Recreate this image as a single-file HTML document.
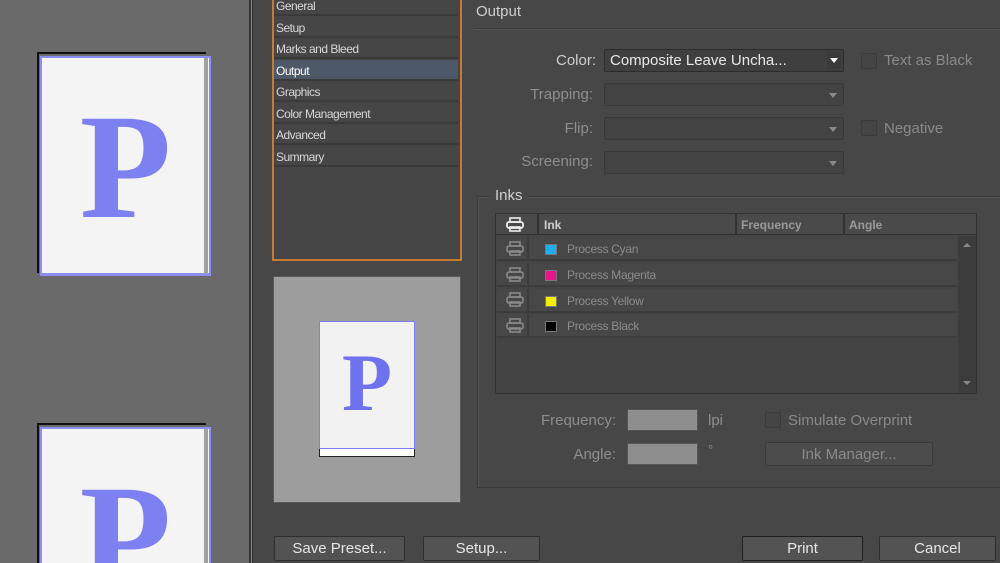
<!DOCTYPE html>
<html style="width:1000px;height:563px;overflow:hidden"><head><meta charset="utf-8"><style>
*{margin:0;padding:0;box-sizing:border-box}
body{width:1000px;height:563px;overflow:hidden;background:#474747;font-family:"Liberation Sans",sans-serif;position:relative}
.a{position:absolute}
.nav div{position:absolute;left:0;width:184px;height:21px;border-bottom:2px solid #3a3a3a;color:#d8d8d8;font-size:12px;line-height:22px;padding-left:2px;letter-spacing:-0.5px}
.lbl{position:absolute;font-size:15px;color:#8e8e8e;text-align:right;width:140px}
.dd{position:absolute;left:604px;width:240px;height:23px;background:#434343;border:1px solid #383838;border-radius:2px}
.dd:after{content:"";position:absolute;right:6px;top:9px;border-left:4px solid transparent;border-right:4px solid transparent;border-top:5px solid #8a8a8a}
.cb{position:absolute;width:16px;height:16px;border:1px solid #3a3a3a;background:#454545;border-radius:2px}
.btn{position:absolute;height:25px;background:#535353;border:1px solid #2e2e2e;border-radius:2px;color:#e6e6e6;font-size:15px;text-align:center;line-height:24px}
.row{position:absolute;left:497px;width:460px;height:24px;border-bottom:2px solid #3c3c3c;font-size:12px;color:#8c8c8c;line-height:25px}
.row .ic{position:absolute;left:0;width:32px;height:24px;border-right:2px solid #3c3c3c}
.sw{position:absolute;left:48px;top:7px;width:12px;height:11px;border:1px solid #777}
.row span{position:absolute;left:70px;letter-spacing:-0.3px}
.P{position:absolute;text-align:center;font-family:'Liberation Serif',serif;font-weight:bold;color:#7c80f0;overflow:hidden}
</style></head><body>
<div class="a" style="left:0;top:0;width:249px;height:563px;background:#6a6a6a;overflow:hidden">
<div class="a" style="left:37px;top:52px;width:169px;height:221px;border:2px solid #111;border-right:none;border-bottom:none"></div>
<div class="a" style="left:40px;top:56px;width:171px;height:220px;background:#f4f4f4;border:2px solid #8a8ef0;border-bottom:3px solid #8a8ef0"></div>
<div class="a" style="left:204px;top:58px;width:4px;height:216px;background:#a0a0a0"></div>
<div class="P" style="left:40px;top:67px;width:171px;height:200px;font-size:150px;line-height:200px">P</div>
<div class="a" style="left:37px;top:423px;width:169px;height:140px;border:2px solid #111;border-right:none;border-bottom:none"></div>
<div class="a" style="left:40px;top:427px;width:171px;height:136px;background:#f4f4f4;border:2px solid #8a8ef0;border-bottom:none"></div>
<div class="a" style="left:204px;top:429px;width:4px;height:134px;background:#a0a0a0"></div>
<div class="P" style="left:40px;top:438px;width:171px;height:125px;font-size:150px;line-height:200px">P</div>
</div>
<div class="a" style="left:249px;top:0;width:2px;height:563px;background:#333"></div>
<div class="a" style="left:251px;top:0;width:1px;height:563px;background:#8a8a8a"></div>
<div class="a" style="left:252px;top:0;width:1px;height:563px;background:#2e2e2e"></div>

<div class="a" style="left:272px;top:-3px;width:190px;height:264px;border:2px solid #c77a32;background:#464646"></div>
<div class="a nav" style="left:274px;top:-5px">
<div style="top:0">General</div>
<div style="top:22px">Setup</div>
<div style="top:43px">Marks and Bleed</div>
<div style="top:65px;background:#4d5868;color:#fff">Output</div>
<div style="top:86px">Graphics</div>
<div style="top:108px">Color Management</div>
<div style="top:129px">Advanced</div>
<div style="top:151px">Summary</div>
</div>

<div class="a" style="left:273px;top:276px;width:188px;height:227px;background:#9d9d9d;border:1px solid #5a5a5a"></div>
<div class="a" style="left:319px;top:448px;width:96px;height:9px;background:#fff;border:1px solid #222;border-top:none"></div>
<div class="a" style="left:319px;top:321px;width:96px;height:128px;background:#f2f2f2;border:1px solid #7a7ef0"></div>
<div class="P" style="left:319px;top:333px;width:96px;height:100px;font-size:82px;line-height:100px;color:#6e72ee">P</div>

<div class="a" style="left:476px;top:3px;font-size:15px;color:#d0d0d0">Output</div>
<div class="a" style="left:474px;top:28px;width:526px;height:1px;background:#3c3c3c"></div>
<div class="a" style="left:474px;top:29px;width:526px;height:1px;background:#525252"></div>

<div class="lbl" style="left:456px;top:52px;color:#cfcfcf">Color:</div>
<div class="dd" style="top:49px;background:#3f3f3f;border-color:#2c2c2c"><span style="position:absolute;left:5px;top:2px;font-size:15px;color:#e8e8e8">Composite Leave Uncha...</span></div>
<div class="a" style="left:827px;top:52px;width:14px;height:17px;background:#3a3a3a"></div>
<div class="a" style="left:830px;top:58px;border-left:4px solid transparent;border-right:4px solid transparent;border-top:5px solid #fff"></div>
<div class="cb" style="left:861px;top:53px"></div>
<div class="a" style="left:884px;top:52px;font-size:15px;color:#8a8a8a">Text as Black</div>

<div class="lbl" style="left:453px;top:86px">Trapping:</div>
<div class="dd" style="top:83px"></div>
<div class="lbl" style="left:453px;top:120px">Flip:</div>
<div class="dd" style="top:117px"></div>
<div class="cb" style="left:861px;top:120px"></div>
<div class="a" style="left:884px;top:120px;font-size:15px;color:#8a8a8a">Negative</div>
<div class="lbl" style="left:453px;top:153px">Screening:</div>
<div class="dd" style="top:151px"></div>

<div class="a" style="left:477px;top:196px;width:523px;height:292px;border:1px solid #3a3a3a;border-right:none;box-shadow:inset 1px 1px 0 #525252"></div>
<div class="a" style="left:490px;top:187px;padding:0 5px;background:#474747;font-size:15px;color:#d0d0d0">Inks</div>

<div class="a" style="left:495px;top:213px;width:482px;height:181px;background:#444;border:1px solid #333"></div>
<div class="a" style="left:496px;top:214px;width:480px;height:21px;background:#4a4a4a;border-bottom:1px solid #333"></div>
<div class="a" style="left:537px;top:214px;width:2px;height:21px;background:#333"></div>
<div class="a" style="left:735px;top:214px;width:2px;height:21px;background:#333"></div>
<div class="a" style="left:843px;top:214px;width:2px;height:21px;background:#333"></div>
<svg class="a" style="left:505px;top:217px" width="20" height="16" viewBox="0 0 20 16"><rect x="5" y="1" width="10" height="4" fill="none" stroke="#eee" stroke-width="1.6"/><rect x="2" y="5" width="16" height="6" rx="2" fill="none" stroke="#eee" stroke-width="1.8"/><rect x="5" y="10" width="10" height="4" fill="none" stroke="#eee" stroke-width="1.6"/></svg>
<div class="a" style="left:544px;top:218px;font-size:12px;font-weight:bold;color:#d0d0d0">Ink</div>
<div class="a" style="left:741px;top:218px;font-size:12px;font-weight:bold;color:#9a9a9a">Frequency</div>
<div class="a" style="left:849px;top:218px;font-size:12px;font-weight:bold;color:#9a9a9a">Angle</div>

<div class="a" style="left:958px;top:236px;width:18px;height:157px;background:#3c3c3c"></div>
<div class="a" style="left:963px;top:243px;border-left:4px solid transparent;border-right:4px solid transparent;border-bottom:4px solid #888"></div>
<div class="a" style="left:963px;top:381px;border-left:4px solid transparent;border-right:4px solid transparent;border-top:4px solid #888"></div>

<div class="row" style="top:237px;background:#474747"><div class="ic"></div><div class="sw" style="background:#1eaef0"></div><span>Process Cyan</span></div>
<div class="row" style="top:263px;background:#474747"><div class="ic"></div><div class="sw" style="background:#e6158a"></div><span>Process Magenta</span></div>
<div class="row" style="top:289px;background:#474747"><div class="ic"></div><div class="sw" style="background:#f6f000"></div><span>Process Yellow</span></div>
<div class="row" style="top:314px;background:#474747"><div class="ic"></div><div class="sw" style="background:#000"></div><span>Process Black</span></div>
<svg class="a" style="left:505px;top:240px" width="20" height="100" viewBox="0 0 20 100">
<g fill="none" stroke="#8a8a8a" stroke-width="1.6">
<g><rect x="5" y="2" width="10" height="4"/><rect x="2" y="6" width="16" height="6" rx="2"/><rect x="5" y="11" width="10" height="4"/></g>
<g transform="translate(0,26)"><rect x="5" y="2" width="10" height="4"/><rect x="2" y="6" width="16" height="6" rx="2"/><rect x="5" y="11" width="10" height="4"/></g>
<g transform="translate(0,51)"><rect x="5" y="2" width="10" height="4"/><rect x="2" y="6" width="16" height="6" rx="2"/><rect x="5" y="11" width="10" height="4"/></g>
<g transform="translate(0,77)"><rect x="5" y="2" width="10" height="4"/><rect x="2" y="6" width="16" height="6" rx="2"/><rect x="5" y="11" width="10" height="4"/></g>
</g></svg>

<div class="lbl" style="left:476px;top:412px">Frequency:</div>
<div class="a" style="left:627px;top:409px;width:71px;height:22px;background:#8e8e8e;border:1px solid #555"></div>
<div class="a" style="left:708px;top:412px;font-size:15px;color:#8e8e8e">lpi</div>
<div class="cb" style="left:765px;top:412px"></div>
<div class="a" style="left:788px;top:412px;font-size:15px;color:#8a8a8a">Simulate Overprint</div>
<div class="lbl" style="left:476px;top:446px">Angle:</div>
<div class="a" style="left:627px;top:443px;width:71px;height:22px;background:#8e8e8e;border:1px solid #555"></div>
<div class="a" style="left:708px;top:442px;font-size:13px;color:#8e8e8e">°</div>
<div class="a" style="left:765px;top:442px;width:168px;height:24px;background:#4c4c4c;border:1px solid #3a3a3a;border-radius:2px;font-size:15px;color:#8a8a8a;text-align:center;line-height:23px">Ink Manager...</div>

<div class="btn" style="left:274px;top:536px;width:131px">Save Preset...</div>
<div class="btn" style="left:423px;top:536px;width:117px">Setup...</div>
<div class="btn" style="left:742px;top:536px;width:121px;border-color:#1e1e1e">Print</div>
<div class="btn" style="left:879px;top:536px;width:117px">Cancel</div>
</body></html>
